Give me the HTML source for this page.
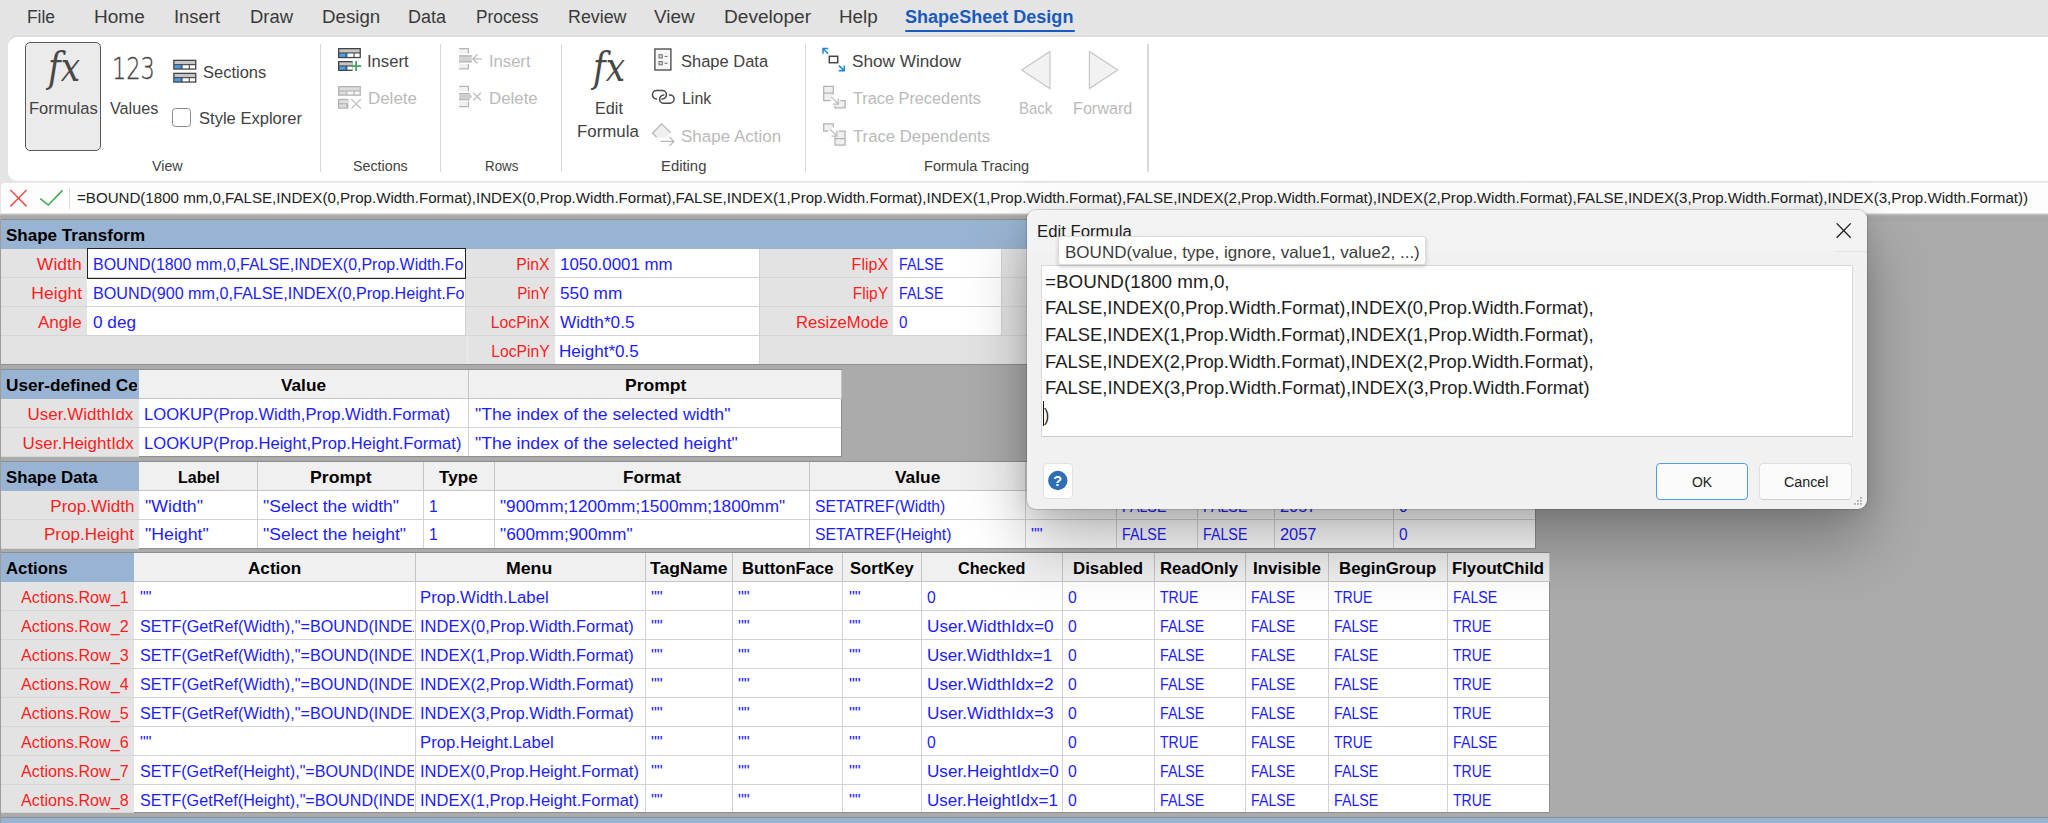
<!DOCTYPE html>
<html lang="en"><head><meta charset="utf-8"><title>ShapeSheet</title>
<style>
html,body{margin:0;padding:0;background:#ababab;}
body{width:2048px;height:823px;position:relative;overflow:hidden;font-family:'Liberation Sans',sans-serif;}
div,.a{position:absolute;}
.g{left:0;top:0;width:2048px;height:823px;}
.t{position:absolute;white-space:pre;line-height:20px;display:block;}
.clip{position:absolute;overflow:hidden;}
</style></head>
<body>
<div class="g" id="ribbon"><div style="left:0.00px;top:0.00px;width:2048.00px;height:36.00px;background:#e4e4e4;"></div>
<span class="t" style="top:6.89px;font-size:18.8px;color:#3a3a3a;left:27.00px;transform:scaleX(0.9251);transform-origin:0 0;">File</span>
<span class="t" style="top:6.89px;font-size:18.8px;color:#3a3a3a;left:93.75px;transform:scaleX(1.0128);transform-origin:0 0;">Home</span>
<span class="t" style="top:6.89px;font-size:18.8px;color:#3a3a3a;left:174.00px;transform:scaleX(0.9790);transform-origin:0 0;">Insert</span>
<span class="t" style="top:6.89px;font-size:18.8px;color:#3a3a3a;left:250.00px;transform:scaleX(0.9811);transform-origin:0 0;">Draw</span>
<span class="t" style="top:6.89px;font-size:18.8px;color:#3a3a3a;left:321.75px;transform:scaleX(0.9963);transform-origin:0 0;">Design</span>
<span class="t" style="top:6.89px;font-size:18.8px;color:#3a3a3a;left:408.00px;transform:scaleX(0.9579);transform-origin:0 0;">Data</span>
<span class="t" style="top:6.89px;font-size:18.8px;color:#3a3a3a;left:476.25px;transform:scaleX(0.9212);transform-origin:0 0;">Process</span>
<span class="t" style="top:6.89px;font-size:18.8px;color:#3a3a3a;left:568.00px;transform:scaleX(0.9498);transform-origin:0 0;">Review</span>
<span class="t" style="top:6.89px;font-size:18.8px;color:#3a3a3a;left:654.40px;transform:scaleX(1.0056);transform-origin:0 0;">View</span>
<span class="t" style="top:6.89px;font-size:18.8px;color:#3a3a3a;left:724.00px;transform:scaleX(1.0162);transform-origin:0 0;">Developer</span>
<span class="t" style="top:6.89px;font-size:18.8px;color:#3a3a3a;left:838.75px;transform:scaleX(1.0028);transform-origin:0 0;">Help</span>
<span class="t" style="top:6.89px;font-size:18.8px;color:#185abd;font-weight:700;left:905.00px;transform:scaleX(0.9604);transform-origin:0 0;">ShapeSheet Design</span>
<div style="left:905.00px;top:29.60px;width:169.70px;height:2.40px;background:#185abd;border-radius:1.2px;"></div>
<div style="left:0.00px;top:36.00px;width:2048.00px;height:177.50px;background:#e4e4e4;"></div>
<div style="left:7.60px;top:35.30px;width:2048.00px;height:145.30px;background:#dcdcdc;border-radius:9px 0 0 9px;"></div>
<div style="left:7.60px;top:36.60px;width:2048.00px;height:144.00px;background:#fff;border-radius:9px 0 0 9px;"></div>
<div style="left:319.65px;top:43.50px;width:1.10px;height:128.50px;background:#d9d9d9;"></div>
<div style="left:440.05px;top:43.50px;width:1.10px;height:128.50px;background:#d9d9d9;"></div>
<div style="left:560.75px;top:43.50px;width:1.10px;height:128.50px;background:#d9d9d9;"></div>
<div style="left:804.75px;top:43.50px;width:1.10px;height:128.50px;background:#d9d9d9;"></div>
<div style="left:1147.45px;top:43.50px;width:1.10px;height:128.50px;background:#d9d9d9;"></div>
<div style="left:25.10px;top:42.40px;width:75.70px;height:109.10px;background:#ebebeb;border:1.2px solid #5a5a5a;border-radius:5px;box-sizing:border-box;"></div>
<span class="t" style="top:98.34px;font-size:17.2px;color:#424242;left:28.80px;transform:scaleX(0.9590);transform-origin:0 0;">Formulas</span>
<span class="t" style="top:98.34px;font-size:17.2px;color:#424242;left:110.20px;transform:scaleX(0.9419);transform-origin:0 0;">Values</span>
<span class="t" style="top:62.34px;font-size:17.2px;color:#424242;left:202.80px;transform:scaleX(0.9587);transform-origin:0 0;">Sections</span>
<span class="t" style="top:108.24px;font-size:17.2px;color:#424242;left:199.00px;transform:scaleX(0.9626);transform-origin:0 0;">Style Explorer</span>
<div style="left:172.20px;top:108.20px;width:18.60px;height:18.40px;background:#fff;border:1.2px solid #8a8a8a;border-radius:3.5px;box-sizing:border-box;"></div>
<span class="t" style="top:156.11px;font-size:14.7px;color:#424242;left:151.60px;transform:scaleX(0.9690);transform-origin:0 0;">View</span>
<span class="t" style="left:111.6px;top:49.4px;font-size:30.4px;line-height:40px;color:#444;font-family:'DejaVu Sans Light','DejaVu Sans','Liberation Sans',sans-serif;font-weight:200;-webkit-text-stroke:.3px #444;transform:scaleX(.74);transform-origin:0 0;">123</span>
<span class="t" style="left:48.1px;top:39.4px;font-size:40.6px;line-height:56px;color:#484848;font-family:'DejaVu Serif Condensed','DejaVu Serif','Liberation Serif',serif;font-style:italic;transform:scaleX(0.94);transform-origin:0 0;">fx</span>
<span class="t" style="left:593.2px;top:39.4px;font-size:40.6px;line-height:56px;color:#484848;font-family:'DejaVu Serif Condensed','DejaVu Serif','Liberation Serif',serif;font-style:italic;transform:scaleX(0.94);transform-origin:0 0;">fx</span>
<span class="t" style="top:51.04px;font-size:17.2px;color:#424242;left:367.40px;transform:scaleX(0.9674);transform-origin:0 0;">Insert</span>
<span class="t" style="top:88.34px;font-size:17.2px;color:#bababa;left:367.70px;transform:scaleX(0.9842);transform-origin:0 0;">Delete</span>
<span class="t" style="top:156.11px;font-size:14.7px;color:#424242;left:353.30px;transform:scaleX(0.9708);transform-origin:0 0;">Sections</span>
<span class="t" style="top:51.04px;font-size:17.2px;color:#bababa;left:488.50px;transform:scaleX(0.9651);transform-origin:0 0;">Insert</span>
<span class="t" style="top:88.34px;font-size:17.2px;color:#bababa;left:489.00px;transform:scaleX(0.9801);transform-origin:0 0;">Delete</span>
<span class="t" style="top:156.11px;font-size:14.7px;color:#424242;left:484.50px;transform:scaleX(0.9092);transform-origin:0 0;">Rows</span>
<span class="t" style="top:98.34px;font-size:17.2px;color:#424242;left:594.60px;transform:scaleX(0.9418);transform-origin:0 0;">Edit</span>
<span class="t" style="top:121.14px;font-size:17.2px;color:#424242;left:577.00px;transform:scaleX(0.9818);transform-origin:0 0;">Formula</span>
<span class="t" style="top:51.04px;font-size:17.2px;color:#424242;left:681.00px;transform:scaleX(0.9594);transform-origin:0 0;">Shape Data</span>
<span class="t" style="top:88.34px;font-size:17.2px;color:#424242;left:681.50px;transform:scaleX(0.9261);transform-origin:0 0;">Link</span>
<span class="t" style="top:125.74px;font-size:17.2px;color:#bababa;left:681.00px;transform:scaleX(0.9892);transform-origin:0 0;">Shape Action</span>
<span class="t" style="top:156.11px;font-size:14.7px;color:#424242;left:660.60px;transform:scaleX(1.0106);transform-origin:0 0;">Editing</span>
<span class="t" style="top:51.04px;font-size:17.2px;color:#424242;left:852.30px;transform:scaleX(0.9999);transform-origin:0 0;">Show Window</span>
<span class="t" style="top:88.34px;font-size:17.2px;color:#bababa;left:852.80px;transform:scaleX(0.9473);transform-origin:0 0;">Trace Precedents</span>
<span class="t" style="top:125.74px;font-size:17.2px;color:#bababa;left:852.80px;transform:scaleX(0.9732);transform-origin:0 0;">Trace Dependents</span>
<span class="t" style="top:98.34px;font-size:17.2px;color:#bababa;left:1019.00px;transform:scaleX(0.8713);transform-origin:0 0;">Back</span>
<span class="t" style="top:98.34px;font-size:17.2px;color:#bababa;left:1073.20px;transform:scaleX(0.9406);transform-origin:0 0;">Forward</span>
<span class="t" style="top:156.11px;font-size:14.7px;color:#424242;left:924.40px;transform:scaleX(0.9903);transform-origin:0 0;">Formula Tracing</span>
<svg class="a" style="left:0;top:36px" width="1160" height="145" viewBox="0 36 1160 145"><rect x="173.20" y="59.70" width="23.20" height="10.00" fill="#444"/><rect x="174.50" y="61.00" width="20.60" height="3.1" fill="#c6c6c6"/><rect x="174.50" y="65.20" width="7.00" height="3.20" fill="#4f9fe3"/><rect x="180.30" y="65.20" width="1.2" height="3.20" fill="#1f78cf"/><rect x="182.60" y="65.20" width="6.10" height="3.20" fill="#fff"/><rect x="189.80" y="65.20" width="5.30" height="3.20" fill="#fff"/><rect x="173.20" y="72.70" width="23.20" height="10.00" fill="#444"/><rect x="174.50" y="74.00" width="20.60" height="3.1" fill="#c6c6c6"/><rect x="174.50" y="78.20" width="7.00" height="3.20" fill="#4f9fe3"/><rect x="180.30" y="78.20" width="1.2" height="3.20" fill="#1f78cf"/><rect x="182.60" y="78.20" width="6.10" height="3.20" fill="#fff"/><rect x="189.80" y="78.20" width="5.30" height="3.20" fill="#fff"/><rect x="338.00" y="48.00" width="22.90" height="10.20" fill="#444"/><rect x="339.30" y="49.30" width="20.30" height="3.1" fill="#c6c6c6"/><rect x="339.30" y="53.50" width="7.00" height="3.40" fill="#4f9fe3"/><rect x="345.10" y="53.50" width="1.2" height="3.40" fill="#1f78cf"/><rect x="347.40" y="53.50" width="6.10" height="3.40" fill="#fff"/><rect x="354.60" y="53.50" width="5.00" height="3.40" fill="#fff"/><rect x="338.00" y="61.00" width="14.60" height="10.00" fill="#444"/><rect x="339.30" y="62.30" width="13.30" height="3.1" fill="#c6c6c6"/><rect x="339.30" y="66.50" width="7.00" height="3.20" fill="#4f9fe3"/><rect x="345.10" y="66.50" width="1.2" height="3.20" fill="#1f78cf"/><rect x="347.40" y="66.50" width="5.20" height="3.20" fill="#fff"/><path d="M351.1 66.2H361.1M356.1 61.1V71.1" stroke="#3da55b" stroke-width="1.8" fill="none"/><rect x="338.00" y="86.00" width="22.90" height="9.80" fill="#b3b3b3"/><rect x="339.30" y="87.30" width="20.30" height="3.1" fill="#dedede"/><rect x="339.30" y="91.50" width="7.00" height="3.00" fill="#dcdcdc"/><rect x="347.40" y="91.50" width="6.10" height="3.00" fill="#f6f6f6"/><rect x="354.60" y="91.50" width="5.00" height="3.00" fill="#f6f6f6"/><rect x="338.00" y="98.80" width="10.40" height="10.00" fill="#b3b3b3"/><rect x="339.30" y="100.10" width="9.10" height="3.1" fill="#dedede"/><rect x="339.30" y="104.30" width="7.00" height="3.20" fill="#dcdcdc"/><path d="M351.4 99.1L360.9 108.6M360.9 99.1L351.4 108.6" stroke="#bcbcbc" stroke-width="1.3" fill="none"/><path d="M459.1 48.60H468.4V53.60H459.1Z" fill="#f1f1f1" stroke="none"/><path d="M459.1 48.60H468.4V53.60" fill="none" stroke="#b5b5b5" stroke-width="1.25"/><path d="M459.1 63.90H468.4V68.90H459.1Z" fill="#f1f1f1" stroke="none"/><path d="M459.1 68.90H468.4V63.90" fill="none" stroke="#b5b5b5" stroke-width="1.25"/><rect x="459.1" y="55.60" width="12.6" height="6.5" fill="#d2d2d2"/><path d="M459.1 55.90H471.9M459.1 61.90H471.9" stroke="#b1b1b1" stroke-width="1.2" fill="none"/><path d="M481.9 58.90H473M477.6 54.30L472.8 58.90L477.6 63.50" stroke="#bdbdbd" stroke-width="1.25" fill="none"/><path d="M459.1 86.30H468.4V91.30H459.1Z" fill="#f1f1f1" stroke="none"/><path d="M459.1 86.30H468.4V91.30" fill="none" stroke="#b5b5b5" stroke-width="1.25"/><path d="M459.1 101.60H468.4V106.60H459.1Z" fill="#f1f1f1" stroke="none"/><path d="M459.1 106.60H468.4V101.60" fill="none" stroke="#b5b5b5" stroke-width="1.25"/><path d="M459.1 93.00H469.2L472.2 96.60L469.2 100.20H459.1Z" fill="#cfcfcf"/><path d="M459.1 93.50H469.4M459.1 99.70H469.4" stroke="#b4b4b4" stroke-width="1.1" fill="none"/><path d="M473.3 92.70L480.9 100.30M480.9 92.70L473.3 100.30" stroke="#bdbdbd" stroke-width="1.25" fill="none"/><rect x="654.9" y="49.0" width="16.0" height="21.0" fill="#f6f6f6" stroke="#444" stroke-width="1.3"/><rect x="659.0" y="54.7" width="3.3" height="3.3" fill="#d8d8d8" stroke="#666" stroke-width="0.9"/><path d="M664.6 56.40H667.5" stroke="#666" stroke-width="1"/><rect x="659.0" y="61.5" width="3.3" height="3.3" fill="#d8d8d8" stroke="#666" stroke-width="0.9"/><path d="M664.6 63.20H667.5" stroke="#666" stroke-width="1"/><path d="M656.6 98.9A4.15 4.15 0 0 1 656.6 90.6H662.3A4.15 4.15 0 0 1 662.3 98.9H661.9" fill="none" stroke="#484848" stroke-width="1.5" stroke-linecap="round"/><path d="M663.8 94.9A4.2 4.2 0 0 0 663.9 103.3H669.9A4.2 4.2 0 0 0 669.9 94.9H669.4" fill="none" stroke="#484848" stroke-width="1.5" stroke-linecap="round"/><path d="M661.6 123.9L670.8 132.4L665.5 137.8H657.2L652.6 133.2Z" fill="#efefef"/><path d="M670.8 132.6L661.6 123.9L652.6 133.2L656.6 137.3" fill="none" stroke="#b7b7b7" stroke-width="1.3"/><path d="M660.6 141.4H673.8M669.4 136.9L673.9 141.4L669.4 145.9" fill="none" stroke="#b7b7b7" stroke-width="1.3"/><rect x="829.3" y="56.3" width="8.4" height="6.4" fill="#fff" stroke="#444" stroke-width="1.5"/><path d="M828.2 53.8L823.2 48.8M823.0 53.7V48.6H828.3" fill="none" stroke="#1e88d6" stroke-width="1.5"/><path d="M839.0 65.6L844.0 70.6M844.2 65.4V70.8H838.7" fill="none" stroke="#1e88d6" stroke-width="1.5"/><path d="M823.7 86.3H833.3V94.0L830.4 100.6H823.7Z" fill="#f0f0f0"/><path d="M823.7 86.3H833.3V93.2H823.7Z" fill="#f0f0f0" stroke="#b2b2b2" stroke-width="1.25"/><path d="M833.3 93.2V94.6M823.7 93.2V100.6H830.4" fill="none" stroke="#b2b2b2" stroke-width="1.25"/><path d="M834.9 100.6H845.1V107.8H834.9Z" fill="#f0f0f0"/><path d="M840.3 100.6H845.1V107.8H834.9V105.8" fill="none" stroke="#b2b2b2" stroke-width="1.25"/><path d="M831.2 96.9L838.2 103.9M838.4 98.5V104.1H832.9" fill="none" stroke="#bdbdbd" stroke-width="1.2"/><path d="M823.7 123.9H833.3V127.2L828.3 131.0H823.7Z" fill="#f0f0f0"/><path d="M833.3 127.2V123.9H823.7V131.0H828.3" fill="none" stroke="#b2b2b2" stroke-width="1.25"/><path d="M835.1 131.2H845.1V145.0H835.1Z" fill="#f0f0f0"/><path d="M838.7 131.2H845.1V145.0H835.1V136.6M835.1 138.5H845.1" fill="none" stroke="#b2b2b2" stroke-width="1.25"/><path d="M830.2 129.5L836.8 135.9M836.9 130.5V136.1H831.5" fill="none" stroke="#bdbdbd" stroke-width="1.2"/><path d="M1021.6 70L1050.0 51.4V88.6Z" fill="#f2f2f2" stroke="#c8c8c8" stroke-width="1.2" stroke-linejoin="miter"/><path d="M1117.8 70L1089.4 51.4V88.6Z" fill="#f2f2f2" stroke="#c8c8c8" stroke-width="1.2" stroke-linejoin="miter"/></svg>
</div>
<div class="g" id="formula-bar"><div style="left:12.00px;top:180.60px;width:2040.00px;height:3.00px;background:linear-gradient(#dedede 0,#e6e6e6 30%,#f6f6f6 100%);"></div>
<div style="left:1.20px;top:183.30px;width:2048.00px;height:30.20px;background:#fdfdfd;border-radius:4px 0 0 0;"></div>
<div style="left:69.20px;top:188.40px;width:1.20px;height:20.60px;background:#dadada;"></div>
<span class="t" style="top:187.73px;font-size:15.2px;color:#222;left:76.90px;transform:scaleX(0.9941);transform-origin:0 0;">=BOUND(1800 mm,0,FALSE,INDEX(0,Prop.Width.Format),INDEX(0,Prop.Width.Format),FALSE,INDEX(1,Prop.Width.Format),INDEX(1,Prop.Width.Format),FALSE,INDEX(2,Prop.Width.Format),INDEX(2,Prop.Width.Format),FALSE,INDEX(3,Prop.Width.Format),INDEX(3,Prop.Width.Format))</span>
<svg class="a" style="left:8px;top:187px" width="60" height="22" viewBox="0 0 60 22"><path d="M2.4 3L18.6 19.4M18.6 3L2.4 19.4" stroke="#e8524f" stroke-width="1.5" fill="none"/><path d="M32.3 11.6L40.3 18L54.6 3.2" stroke="#3fa556" stroke-width="1.6" fill="none"/></svg>
</div>
<div class="g" id="shapesheet"><div style="left:0.00px;top:213.50px;width:2048.00px;height:610.00px;background:#ababab;"></div>
<div style="left:0.00px;top:213.50px;width:2048.00px;height:7.00px;background:linear-gradient(#c4c4c4 0,#a9a9a9 28%,#a6a6a6 100%);"></div>
<div style="left:0.00px;top:220.00px;width:1.30px;height:603.00px;background:#9c9c9c;"></div>
<div style="left:1.00px;top:219.00px;width:1540.40px;height:146.40px;background:#8e8e8e;"></div>
<div style="left:1.00px;top:220.00px;width:1539.00px;height:144.00px;background:#d3d3d3;"></div>
<div style="left:1.00px;top:220.00px;width:1539.00px;height:29.00px;background:#99b4d2;"></div>
<span class="t" style="top:225.35px;font-size:16.3px;color:#000;font-weight:700;left:5.70px;transform:scaleX(1.0454);transform-origin:0 0;">Shape Transform</span>
<div style="left:1.00px;top:249.00px;width:86.00px;height:29.00px;background:#d6d6d6;"></div>
<div style="left:1.00px;top:249.00px;width:86.00px;height:28.00px;background:#e3e3e3;"></div>
<span class="t" style="top:254.25px;font-size:16.3px;color:#ff1c1c;right:1966.25px;transform:scaleX(1.0751);transform-origin:100% 0;">Width</span>
<div style="left:87.00px;top:249.00px;width:378.00px;height:28.00px;background:#fff;"></div>
<div class="clip" style="left:92.50px;top:249px;width:371.90px;height:29px"><span class="t" style="left:0;top:5.25px;font-size:16.3px;color:#1c1cff;transform:scaleX(0.9793);transform-origin:0 0;">BOUND(1800 mm,0,FALSE,INDEX(0,Prop.Width.Format),INDEX(0,Prop.Width.Format))</span></div>
<div style="left:466.00px;top:249.00px;width:89.00px;height:29.00px;background:#d6d6d6;"></div>
<div style="left:466.00px;top:249.00px;width:89.00px;height:28.00px;background:#e3e3e3;"></div>
<span class="t" style="top:254.25px;font-size:16.3px;color:#ff1c1c;right:1498.80px;transform:scaleX(0.9649);transform-origin:100% 0;">PinX</span>
<div style="left:555.00px;top:249.00px;width:204.00px;height:28.00px;background:#fff;"></div>
<span class="t" style="top:254.25px;font-size:16.3px;color:#1c1cff;left:559.70px;transform:scaleX(1.0375);transform-origin:0 0;">1050.0001 mm</span>
<div style="left:760.00px;top:249.00px;width:133.00px;height:29.00px;background:#d6d6d6;"></div>
<div style="left:760.00px;top:249.00px;width:133.00px;height:28.00px;background:#e3e3e3;"></div>
<span class="t" style="top:254.25px;font-size:16.3px;color:#ff1c1c;right:1159.80px;transform:scaleX(0.9836);transform-origin:100% 0;">FlipX</span>
<div style="left:893.00px;top:249.00px;width:108.00px;height:28.00px;background:#fff;"></div>
<span class="t" style="top:254.25px;font-size:16.3px;color:#1c1cff;left:899.00px;transform:scaleX(0.8760);transform-origin:0 0;">FALSE</span>
<div style="left:1002.00px;top:249.00px;width:538.00px;height:29.00px;background:#d6d6d6;"></div>
<div style="left:1002.00px;top:249.00px;width:538.00px;height:28.00px;background:#e3e3e3;"></div>
<div style="left:1.00px;top:278.00px;width:86.00px;height:29.00px;background:#d6d6d6;"></div>
<div style="left:1.00px;top:278.00px;width:86.00px;height:28.00px;background:#e3e3e3;"></div>
<span class="t" style="top:283.15px;font-size:16.3px;color:#ff1c1c;right:1966.25px;transform:scaleX(1.0780);transform-origin:100% 0;">Height</span>
<div style="left:87.00px;top:278.00px;width:378.00px;height:28.00px;background:#fff;"></div>
<div class="clip" style="left:92.50px;top:278px;width:371.90px;height:29px"><span class="t" style="left:0;top:5.15px;font-size:16.3px;color:#1c1cff;transform:scaleX(0.9917);transform-origin:0 0;">BOUND(900 mm,0,FALSE,INDEX(0,Prop.Height.Format),INDEX(0,Prop.Height.Format))</span></div>
<div style="left:466.00px;top:278.00px;width:89.00px;height:29.00px;background:#d6d6d6;"></div>
<div style="left:466.00px;top:278.00px;width:89.00px;height:28.00px;background:#e3e3e3;"></div>
<span class="t" style="top:283.15px;font-size:16.3px;color:#ff1c1c;right:1498.80px;transform:scaleX(0.9359);transform-origin:100% 0;">PinY</span>
<div style="left:555.00px;top:278.00px;width:204.00px;height:28.00px;background:#fff;"></div>
<span class="t" style="top:283.15px;font-size:16.3px;color:#1c1cff;left:559.70px;transform:scaleX(1.0590);transform-origin:0 0;">550 mm</span>
<div style="left:760.00px;top:278.00px;width:133.00px;height:29.00px;background:#d6d6d6;"></div>
<div style="left:760.00px;top:278.00px;width:133.00px;height:28.00px;background:#e3e3e3;"></div>
<span class="t" style="top:283.15px;font-size:16.3px;color:#ff1c1c;right:1159.80px;transform:scaleX(0.9539);transform-origin:100% 0;">FlipY</span>
<div style="left:893.00px;top:278.00px;width:108.00px;height:28.00px;background:#fff;"></div>
<span class="t" style="top:283.15px;font-size:16.3px;color:#1c1cff;left:899.00px;transform:scaleX(0.8760);transform-origin:0 0;">FALSE</span>
<div style="left:1002.00px;top:278.00px;width:538.00px;height:29.00px;background:#d6d6d6;"></div>
<div style="left:1002.00px;top:278.00px;width:538.00px;height:28.00px;background:#e3e3e3;"></div>
<div style="left:1.00px;top:307.00px;width:86.00px;height:29.00px;background:#d6d6d6;"></div>
<div style="left:1.00px;top:307.00px;width:86.00px;height:28.00px;background:#e3e3e3;"></div>
<span class="t" style="top:312.05px;font-size:16.3px;color:#ff1c1c;right:1966.25px;transform:scaleX(1.0503);transform-origin:100% 0;">Angle</span>
<div style="left:87.00px;top:307.00px;width:378.00px;height:28.00px;background:#fff;"></div>
<span class="t" style="top:312.05px;font-size:16.3px;color:#1c1cff;left:92.50px;transform:scaleX(1.0552);transform-origin:0 0;">0 deg</span>
<div style="left:466.00px;top:307.00px;width:89.00px;height:29.00px;background:#d6d6d6;"></div>
<div style="left:466.00px;top:307.00px;width:89.00px;height:28.00px;background:#e3e3e3;"></div>
<span class="t" style="top:312.05px;font-size:16.3px;color:#ff1c1c;right:1498.80px;transform:scaleX(0.9710);transform-origin:100% 0;">LocPinX</span>
<div style="left:555.00px;top:307.00px;width:204.00px;height:28.00px;background:#fff;"></div>
<span class="t" style="top:312.05px;font-size:16.3px;color:#1c1cff;left:559.70px;transform:scaleX(1.0553);transform-origin:0 0;">Width*0.5</span>
<div style="left:760.00px;top:307.00px;width:133.00px;height:29.00px;background:#d6d6d6;"></div>
<div style="left:760.00px;top:307.00px;width:133.00px;height:28.00px;background:#e3e3e3;"></div>
<span class="t" style="top:312.05px;font-size:16.3px;color:#ff1c1c;right:1159.80px;transform:scaleX(1.0232);transform-origin:100% 0;">ResizeMode</span>
<div style="left:893.00px;top:307.00px;width:108.00px;height:28.00px;background:#fff;"></div>
<span class="t" style="top:312.05px;font-size:16.3px;color:#1c1cff;left:899.00px;transform:scaleX(0.9379);transform-origin:0 0;">0</span>
<div style="left:1002.00px;top:307.00px;width:538.00px;height:29.00px;background:#d6d6d6;"></div>
<div style="left:1002.00px;top:307.00px;width:538.00px;height:28.00px;background:#e3e3e3;"></div>
<div style="left:1.00px;top:336.00px;width:466.00px;height:28.00px;background:#d6d6d6;"></div>
<div style="left:1.00px;top:336.00px;width:466.00px;height:28.00px;background:#e3e3e3;"></div>
<div style="left:467.00px;top:336.00px;width:1.00px;height:28.00px;background:#ededed;"></div>
<div style="left:468.00px;top:336.00px;width:87.00px;height:28.00px;background:#d6d6d6;"></div>
<div style="left:468.00px;top:336.00px;width:87.00px;height:28.00px;background:#e3e3e3;"></div>
<span class="t" style="top:340.95px;font-size:16.3px;color:#ff1c1c;right:1498.80px;transform:scaleX(0.9628);transform-origin:100% 0;">LocPinY</span>
<div style="left:555.00px;top:336.00px;width:204.00px;height:28.00px;background:#fff;"></div>
<span class="t" style="top:340.95px;font-size:16.3px;color:#1c1cff;left:559.20px;transform:scaleX(1.0494);transform-origin:0 0;">Height*0.5</span>
<div style="left:760.00px;top:336.00px;width:780.00px;height:28.00px;background:#d6d6d6;"></div>
<div style="left:760.00px;top:336.00px;width:780.00px;height:28.00px;background:#e3e3e3;"></div>
<div style="left:86.60px;top:248.30px;width:379.30px;height:30.30px;border:1.6px solid #242424;box-sizing:border-box;"></div>
<div style="left:1.00px;top:369.00px;width:841.40px;height:88.40px;background:#8e8e8e;"></div>
<div style="left:1.00px;top:370.00px;width:840.00px;height:86.00px;background:#d3d3d3;"></div>
<div style="left:1.00px;top:370.00px;width:138.00px;height:29.00px;background:#99b4d2;"></div>
<div class="clip" style="left:1px;top:370px;width:136.40px;height:29px"><span class="t" style="left:4.50px;top:5.35px;font-size:16.3px;font-weight:700;transform:scaleX(1.0556);transform-origin:0 0;">User-defined Cells</span></div>
<div style="left:139.00px;top:370.00px;width:330.00px;height:29.00px;background:#c4c4c4;"></div>
<div style="left:139.00px;top:370.00px;width:329.00px;height:28.00px;background:#f0f0f0;"></div>
<span class="t" style="top:375.35px;font-size:16.3px;color:#000;font-weight:700;left:281.25px;transform:scaleX(1.0577);transform-origin:0 0;">Value</span>
<div style="left:469.00px;top:370.00px;width:373.00px;height:29.00px;background:#c4c4c4;"></div>
<div style="left:469.00px;top:370.00px;width:372.00px;height:28.00px;background:#f0f0f0;"></div>
<span class="t" style="top:375.35px;font-size:16.3px;color:#000;font-weight:700;left:624.60px;transform:scaleX(1.0775);transform-origin:0 0;">Prompt</span>
<div style="left:1.00px;top:399.00px;width:138.00px;height:29.00px;background:#d6d6d6;"></div>
<div style="left:1.00px;top:399.00px;width:138.00px;height:28.00px;background:#e3e3e3;"></div>
<span class="t" style="top:403.75px;font-size:16.3px;color:#ff1c1c;right:1914.25px;transform:scaleX(1.0435);transform-origin:100% 0;">User.WidthIdx</span>
<div style="left:139.00px;top:399.00px;width:329.00px;height:28.00px;background:#fff;"></div>
<span class="t" style="top:403.75px;font-size:16.3px;color:#1c1cff;left:143.75px;transform:scaleX(1.0195);transform-origin:0 0;">LOOKUP(Prop.Width,Prop.Width.Format)</span>
<div style="left:469.00px;top:399.00px;width:372.00px;height:28.00px;background:#fff;"></div>
<span class="t" style="top:403.75px;font-size:16.3px;color:#1c1cff;left:474.60px;transform:scaleX(1.0821);transform-origin:0 0;">"The index of the selected width"</span>
<div style="left:1.00px;top:428.00px;width:138.00px;height:29.00px;background:#d6d6d6;"></div>
<div style="left:1.00px;top:428.00px;width:138.00px;height:28.00px;background:#e3e3e3;"></div>
<span class="t" style="top:432.65px;font-size:16.3px;color:#ff1c1c;right:1914.25px;transform:scaleX(1.0417);transform-origin:100% 0;">User.HeightIdx</span>
<div style="left:139.00px;top:428.00px;width:329.00px;height:28.00px;background:#fff;"></div>
<span class="t" style="top:432.65px;font-size:16.3px;color:#1c1cff;left:143.75px;transform:scaleX(1.0200);transform-origin:0 0;">LOOKUP(Prop.Height,Prop.Height.Format)</span>
<div style="left:469.00px;top:428.00px;width:372.00px;height:28.00px;background:#fff;"></div>
<span class="t" style="top:432.65px;font-size:16.3px;color:#1c1cff;left:474.60px;transform:scaleX(1.0843);transform-origin:0 0;">"The index of the selected height"</span>
<div style="left:1.00px;top:461.00px;width:1535.40px;height:88.40px;background:#8e8e8e;"></div>
<div style="left:1.00px;top:462.00px;width:1534.00px;height:86.00px;background:#d3d3d3;"></div>
<div style="left:1.00px;top:462.00px;width:138.00px;height:29.00px;background:#99b4d2;"></div>
<span class="t" style="top:467.35px;font-size:16.3px;color:#000;font-weight:700;left:5.50px;transform:scaleX(1.0317);transform-origin:0 0;">Shape Data</span>
<div style="left:139.00px;top:462.00px;width:119.00px;height:29.00px;background:#c4c4c4;"></div>
<div style="left:139.00px;top:462.00px;width:118.00px;height:28.00px;background:#f0f0f0;"></div>
<span class="t" style="top:467.35px;font-size:16.3px;color:#000;font-weight:700;left:177.50px;transform:scaleX(0.9816);transform-origin:0 0;">Label</span>
<div style="left:258.00px;top:462.00px;width:166.00px;height:29.00px;background:#c4c4c4;"></div>
<div style="left:258.00px;top:462.00px;width:165.00px;height:28.00px;background:#f0f0f0;"></div>
<span class="t" style="top:467.35px;font-size:16.3px;color:#000;font-weight:700;left:310.00px;transform:scaleX(1.0836);transform-origin:0 0;">Prompt</span>
<div style="left:424.00px;top:462.00px;width:71.00px;height:29.00px;background:#c4c4c4;"></div>
<div style="left:424.00px;top:462.00px;width:70.00px;height:28.00px;background:#f0f0f0;"></div>
<span class="t" style="top:467.35px;font-size:16.3px;color:#000;font-weight:700;left:439.25px;transform:scaleX(1.0531);transform-origin:0 0;">Type</span>
<div style="left:495.00px;top:462.00px;width:315.00px;height:29.00px;background:#c4c4c4;"></div>
<div style="left:495.00px;top:462.00px;width:314.00px;height:28.00px;background:#f0f0f0;"></div>
<span class="t" style="top:467.35px;font-size:16.3px;color:#000;font-weight:700;left:622.50px;transform:scaleX(1.0510);transform-origin:0 0;">Format</span>
<div style="left:810.00px;top:462.00px;width:216.00px;height:29.00px;background:#c4c4c4;"></div>
<div style="left:810.00px;top:462.00px;width:215.00px;height:28.00px;background:#f0f0f0;"></div>
<span class="t" style="top:467.35px;font-size:16.3px;color:#000;font-weight:700;left:894.90px;transform:scaleX(1.0647);transform-origin:0 0;">Value</span>
<div style="left:1026.00px;top:462.00px;width:91.00px;height:29.00px;background:#c4c4c4;"></div>
<div style="left:1026.00px;top:462.00px;width:90.00px;height:28.00px;background:#f0f0f0;"></div>
<span class="t" style="top:467.35px;font-size:16.3px;color:#000;font-weight:700;left:1038.50px;transform:scaleX(1.0202);transform-origin:0 0;">SortKey</span>
<div style="left:1117.00px;top:462.00px;width:81.00px;height:29.00px;background:#c4c4c4;"></div>
<div style="left:1117.00px;top:462.00px;width:80.00px;height:28.00px;background:#f0f0f0;"></div>
<span class="t" style="top:467.35px;font-size:16.3px;color:#000;font-weight:700;left:1122.50px;transform:scaleX(1.0436);transform-origin:0 0;">Invisible</span>
<div style="left:1198.00px;top:462.00px;width:77.00px;height:29.00px;background:#c4c4c4;"></div>
<div style="left:1198.00px;top:462.00px;width:76.00px;height:28.00px;background:#f0f0f0;"></div>
<span class="t" style="top:467.35px;font-size:16.3px;color:#000;font-weight:700;left:1221.50px;transform:scaleX(0.9205);transform-origin:0 0;">Ask</span>
<div style="left:1275.00px;top:462.00px;width:119.00px;height:29.00px;background:#c4c4c4;"></div>
<div style="left:1275.00px;top:462.00px;width:118.00px;height:28.00px;background:#f0f0f0;"></div>
<span class="t" style="top:467.35px;font-size:16.3px;color:#000;font-weight:700;left:1306.00px;transform:scaleX(0.9969);transform-origin:0 0;">LangID</span>
<div style="left:1394.00px;top:462.00px;width:142.00px;height:29.00px;background:#c4c4c4;"></div>
<div style="left:1394.00px;top:462.00px;width:141.00px;height:28.00px;background:#f0f0f0;"></div>
<span class="t" style="top:467.35px;font-size:16.3px;color:#000;font-weight:700;left:1428.50px;transform:scaleX(1.0260);transform-origin:0 0;">Calendar</span>
<div style="left:1.00px;top:491.00px;width:138.00px;height:29.00px;background:#d6d6d6;"></div>
<div style="left:1.00px;top:491.00px;width:138.00px;height:28.00px;background:#e3e3e3;"></div>
<span class="t" style="top:495.55px;font-size:16.3px;color:#ff1c1c;right:1913.75px;transform:scaleX(1.0460);transform-origin:100% 0;">Prop.Width</span>
<div style="left:139.00px;top:491.00px;width:118.00px;height:28.00px;background:#fff;"></div>
<span class="t" style="top:495.55px;font-size:16.3px;color:#1c1cff;left:145.00px;transform:scaleX(1.0905);transform-origin:0 0;">"Width"</span>
<div style="left:258.00px;top:491.00px;width:165.00px;height:28.00px;background:#fff;"></div>
<span class="t" style="top:495.55px;font-size:16.3px;color:#1c1cff;left:263.25px;transform:scaleX(1.0751);transform-origin:0 0;">"Select the width"</span>
<div style="left:424.00px;top:491.00px;width:70.00px;height:28.00px;background:#fff;"></div>
<span class="t" style="top:495.55px;font-size:16.3px;color:#1c1cff;left:429.20px;transform:scaleX(0.9600);transform-origin:0 0;">1</span>
<div style="left:495.00px;top:491.00px;width:314.00px;height:28.00px;background:#fff;"></div>
<span class="t" style="top:495.55px;font-size:16.3px;color:#1c1cff;left:499.80px;transform:scaleX(1.0584);transform-origin:0 0;">"900mm;1200mm;1500mm;1800mm"</span>
<div style="left:810.00px;top:491.00px;width:215.00px;height:28.00px;background:#fff;"></div>
<span class="t" style="top:495.55px;font-size:16.3px;color:#1c1cff;left:815.00px;transform:scaleX(0.9646);transform-origin:0 0;">SETATREF(Width)</span>
<div style="left:1026.00px;top:491.00px;width:90.00px;height:28.00px;background:#fff;"></div>
<span class="t" style="top:495.55px;font-size:16.3px;color:#1c1cff;left:1030.80px;transform:scaleX(1.0119);transform-origin:0 0;">""</span>
<div style="left:1117.00px;top:491.00px;width:80.00px;height:28.00px;background:#fff;"></div>
<span class="t" style="top:495.55px;font-size:16.3px;color:#1c1cff;left:1121.90px;transform:scaleX(0.8760);transform-origin:0 0;">FALSE</span>
<div style="left:1198.00px;top:491.00px;width:76.00px;height:28.00px;background:#fff;"></div>
<span class="t" style="top:495.55px;font-size:16.3px;color:#1c1cff;left:1202.60px;transform:scaleX(0.8760);transform-origin:0 0;">FALSE</span>
<div style="left:1275.00px;top:491.00px;width:118.00px;height:28.00px;background:#fff;"></div>
<span class="t" style="top:495.55px;font-size:16.3px;color:#1c1cff;left:1279.90px;transform:scaleX(1.0073);transform-origin:0 0;">2057</span>
<div style="left:1394.00px;top:491.00px;width:141.00px;height:28.00px;background:#fff;"></div>
<span class="t" style="top:495.55px;font-size:16.3px;color:#1c1cff;left:1398.60px;transform:scaleX(0.9490);transform-origin:0 0;">0</span>
<div style="left:1.00px;top:520.00px;width:138.00px;height:29.00px;background:#d6d6d6;"></div>
<div style="left:1.00px;top:520.00px;width:138.00px;height:28.00px;background:#e3e3e3;"></div>
<span class="t" style="top:524.45px;font-size:16.3px;color:#ff1c1c;right:1913.75px;transform:scaleX(1.0467);transform-origin:100% 0;">Prop.Height</span>
<div style="left:139.00px;top:520.00px;width:118.00px;height:28.00px;background:#fff;"></div>
<span class="t" style="top:524.45px;font-size:16.3px;color:#1c1cff;left:145.00px;transform:scaleX(1.0874);transform-origin:0 0;">"Height"</span>
<div style="left:258.00px;top:520.00px;width:165.00px;height:28.00px;background:#fff;"></div>
<span class="t" style="top:524.45px;font-size:16.3px;color:#1c1cff;left:263.25px;transform:scaleX(1.0763);transform-origin:0 0;">"Select the height"</span>
<div style="left:424.00px;top:520.00px;width:70.00px;height:28.00px;background:#fff;"></div>
<span class="t" style="top:524.45px;font-size:16.3px;color:#1c1cff;left:429.20px;transform:scaleX(0.9600);transform-origin:0 0;">1</span>
<div style="left:495.00px;top:520.00px;width:314.00px;height:28.00px;background:#fff;"></div>
<span class="t" style="top:524.45px;font-size:16.3px;color:#1c1cff;left:499.80px;transform:scaleX(1.0636);transform-origin:0 0;">"600mm;900mm"</span>
<div style="left:810.00px;top:520.00px;width:215.00px;height:28.00px;background:#fff;"></div>
<span class="t" style="top:524.45px;font-size:16.3px;color:#1c1cff;left:815.00px;transform:scaleX(0.9713);transform-origin:0 0;">SETATREF(Height)</span>
<div style="left:1026.00px;top:520.00px;width:90.00px;height:28.00px;background:#fff;"></div>
<span class="t" style="top:524.45px;font-size:16.3px;color:#1c1cff;left:1030.80px;transform:scaleX(1.0119);transform-origin:0 0;">""</span>
<div style="left:1117.00px;top:520.00px;width:80.00px;height:28.00px;background:#fff;"></div>
<span class="t" style="top:524.45px;font-size:16.3px;color:#1c1cff;left:1121.90px;transform:scaleX(0.8760);transform-origin:0 0;">FALSE</span>
<div style="left:1198.00px;top:520.00px;width:76.00px;height:28.00px;background:#fff;"></div>
<span class="t" style="top:524.45px;font-size:16.3px;color:#1c1cff;left:1202.60px;transform:scaleX(0.8760);transform-origin:0 0;">FALSE</span>
<div style="left:1275.00px;top:520.00px;width:118.00px;height:28.00px;background:#fff;"></div>
<span class="t" style="top:524.45px;font-size:16.3px;color:#1c1cff;left:1279.90px;transform:scaleX(1.0073);transform-origin:0 0;">2057</span>
<div style="left:1394.00px;top:520.00px;width:141.00px;height:28.00px;background:#fff;"></div>
<span class="t" style="top:524.45px;font-size:16.3px;color:#1c1cff;left:1398.60px;transform:scaleX(0.9490);transform-origin:0 0;">0</span>
<div style="left:1.00px;top:552.00px;width:1549.40px;height:261.40px;background:#8e8e8e;"></div>
<div style="left:1.00px;top:553.00px;width:1548.00px;height:259.00px;background:#d3d3d3;"></div>
<div style="left:1.00px;top:553.00px;width:133.00px;height:29.00px;background:#99b4d2;"></div>
<span class="t" style="top:558.35px;font-size:16.3px;color:#000;font-weight:700;left:5.50px;transform:scaleX(1.0298);transform-origin:0 0;">Actions</span>
<div style="left:134.00px;top:553.00px;width:282.00px;height:29.00px;background:#c4c4c4;"></div>
<div style="left:134.00px;top:553.00px;width:281.00px;height:28.00px;background:#f0f0f0;"></div>
<span class="t" style="top:558.35px;font-size:16.3px;color:#000;font-weight:700;left:247.50px;transform:scaleX(1.0512);transform-origin:0 0;">Action</span>
<div style="left:416.00px;top:553.00px;width:230.00px;height:29.00px;background:#c4c4c4;"></div>
<div style="left:416.00px;top:553.00px;width:229.00px;height:28.00px;background:#f0f0f0;"></div>
<span class="t" style="top:558.35px;font-size:16.3px;color:#000;font-weight:700;left:506.25px;transform:scaleX(1.0878);transform-origin:0 0;">Menu</span>
<div style="left:646.00px;top:553.00px;width:87.00px;height:29.00px;background:#c4c4c4;"></div>
<div style="left:646.00px;top:553.00px;width:86.00px;height:28.00px;background:#f0f0f0;"></div>
<span class="t" style="top:558.35px;font-size:16.3px;color:#000;font-weight:700;left:650.00px;transform:scaleX(1.0750);transform-origin:0 0;">TagName</span>
<div style="left:733.00px;top:553.00px;width:110.00px;height:29.00px;background:#c4c4c4;"></div>
<div style="left:733.00px;top:553.00px;width:109.00px;height:28.00px;background:#f0f0f0;"></div>
<span class="t" style="top:558.35px;font-size:16.3px;color:#000;font-weight:700;left:741.75px;transform:scaleX(1.0218);transform-origin:0 0;">ButtonFace</span>
<div style="left:843.00px;top:553.00px;width:79.00px;height:29.00px;background:#c4c4c4;"></div>
<div style="left:843.00px;top:553.00px;width:78.00px;height:28.00px;background:#f0f0f0;"></div>
<span class="t" style="top:558.35px;font-size:16.3px;color:#000;font-weight:700;left:850.00px;transform:scaleX(1.0210);transform-origin:0 0;">SortKey</span>
<div style="left:922.00px;top:553.00px;width:141.00px;height:29.00px;background:#c4c4c4;"></div>
<div style="left:922.00px;top:553.00px;width:140.00px;height:28.00px;background:#f0f0f0;"></div>
<span class="t" style="top:558.35px;font-size:16.3px;color:#000;font-weight:700;left:958.00px;transform:scaleX(0.9945);transform-origin:0 0;">Checked</span>
<div style="left:1063.00px;top:553.00px;width:92.00px;height:29.00px;background:#c4c4c4;"></div>
<div style="left:1063.00px;top:553.00px;width:91.00px;height:28.00px;background:#f0f0f0;"></div>
<span class="t" style="top:558.35px;font-size:16.3px;color:#000;font-weight:700;left:1073.00px;transform:scaleX(1.0313);transform-origin:0 0;">Disabled</span>
<div style="left:1155.00px;top:553.00px;width:91.00px;height:29.00px;background:#c4c4c4;"></div>
<div style="left:1155.00px;top:553.00px;width:90.00px;height:28.00px;background:#f0f0f0;"></div>
<span class="t" style="top:558.35px;font-size:16.3px;color:#000;font-weight:700;left:1160.00px;transform:scaleX(1.0261);transform-origin:0 0;">ReadOnly</span>
<div style="left:1246.00px;top:553.00px;width:83.00px;height:29.00px;background:#c4c4c4;"></div>
<div style="left:1246.00px;top:553.00px;width:82.00px;height:28.00px;background:#f0f0f0;"></div>
<span class="t" style="top:558.35px;font-size:16.3px;color:#000;font-weight:700;left:1253.25px;transform:scaleX(1.0436);transform-origin:0 0;">Invisible</span>
<div style="left:1329.00px;top:553.00px;width:119.00px;height:29.00px;background:#c4c4c4;"></div>
<div style="left:1329.00px;top:553.00px;width:118.00px;height:28.00px;background:#f0f0f0;"></div>
<span class="t" style="top:558.35px;font-size:16.3px;color:#000;font-weight:700;left:1338.50px;transform:scaleX(1.0334);transform-origin:0 0;">BeginGroup</span>
<div style="left:1448.00px;top:553.00px;width:102.00px;height:29.00px;background:#c4c4c4;"></div>
<div style="left:1448.00px;top:553.00px;width:101.00px;height:28.00px;background:#f0f0f0;"></div>
<span class="t" style="top:558.35px;font-size:16.3px;color:#000;font-weight:700;left:1451.80px;transform:scaleX(1.0276);transform-origin:0 0;">FlyoutChild</span>
<div style="left:1.00px;top:582.00px;width:133.00px;height:29.00px;background:#d6d6d6;"></div>
<div style="left:1.00px;top:582.00px;width:133.00px;height:28.00px;background:#e3e3e3;"></div>
<span class="t" style="top:587.35px;font-size:16.3px;color:#ff1c1c;right:1919.25px;transform:scaleX(0.9898);transform-origin:100% 0;">Actions.Row_1</span>
<div style="left:134.00px;top:582.00px;width:281.00px;height:28.00px;background:#fff;"></div>
<span class="t" style="top:587.35px;font-size:16.3px;color:#1c1cff;left:140.00px;transform:scaleX(0.9946);transform-origin:0 0;">""</span>
<div style="left:416.00px;top:582.00px;width:229.00px;height:28.00px;background:#fff;"></div>
<span class="t" style="top:587.35px;font-size:16.3px;color:#1c1cff;left:420.00px;transform:scaleX(1.0308);transform-origin:0 0;">Prop.Width.Label</span>
<div style="left:646.00px;top:582.00px;width:86.00px;height:28.00px;background:#fff;"></div>
<span class="t" style="top:587.35px;font-size:16.3px;color:#1c1cff;left:650.75px;transform:scaleX(1.0162);transform-origin:0 0;">""</span>
<div style="left:733.00px;top:582.00px;width:109.00px;height:28.00px;background:#fff;"></div>
<span class="t" style="top:587.35px;font-size:16.3px;color:#1c1cff;left:738.25px;transform:scaleX(1.0162);transform-origin:0 0;">""</span>
<div style="left:843.00px;top:582.00px;width:78.00px;height:28.00px;background:#fff;"></div>
<span class="t" style="top:587.35px;font-size:16.3px;color:#1c1cff;left:848.75px;transform:scaleX(1.0162);transform-origin:0 0;">""</span>
<div style="left:922.00px;top:582.00px;width:140.00px;height:28.00px;background:#fff;"></div>
<span class="t" style="top:587.35px;font-size:16.3px;color:#1c1cff;left:926.75px;transform:scaleX(0.9655);transform-origin:0 0;">0</span>
<div style="left:1063.00px;top:582.00px;width:91.00px;height:28.00px;background:#fff;"></div>
<span class="t" style="top:587.35px;font-size:16.3px;color:#1c1cff;left:1068.00px;transform:scaleX(0.9655);transform-origin:0 0;">0</span>
<div style="left:1155.00px;top:582.00px;width:90.00px;height:28.00px;background:#fff;"></div>
<span class="t" style="top:587.35px;font-size:16.3px;color:#1c1cff;left:1159.50px;transform:scaleX(0.8663);transform-origin:0 0;">TRUE</span>
<div style="left:1246.00px;top:582.00px;width:82.00px;height:28.00px;background:#fff;"></div>
<span class="t" style="top:587.35px;font-size:16.3px;color:#1c1cff;left:1251.25px;transform:scaleX(0.8740);transform-origin:0 0;">FALSE</span>
<div style="left:1329.00px;top:582.00px;width:118.00px;height:28.00px;background:#fff;"></div>
<span class="t" style="top:587.35px;font-size:16.3px;color:#1c1cff;left:1334.40px;transform:scaleX(0.8663);transform-origin:0 0;">TRUE</span>
<div style="left:1448.00px;top:582.00px;width:101.00px;height:28.00px;background:#fff;"></div>
<span class="t" style="top:587.35px;font-size:16.3px;color:#1c1cff;left:1453.10px;transform:scaleX(0.8740);transform-origin:0 0;">FALSE</span>
<div style="left:1.00px;top:611.00px;width:133.00px;height:29.00px;background:#d6d6d6;"></div>
<div style="left:1.00px;top:611.00px;width:133.00px;height:28.00px;background:#e3e3e3;"></div>
<span class="t" style="top:616.28px;font-size:16.3px;color:#ff1c1c;right:1919.25px;transform:scaleX(0.9898);transform-origin:100% 0;">Actions.Row_2</span>
<div style="left:134.00px;top:611.00px;width:281.00px;height:28.00px;background:#fff;"></div>
<div class="clip" style="left:140.00px;top:611px;width:274.40px;height:29px"><span class="t" style="left:0;top:5.28px;font-size:16.3px;color:#1c1cff;transform:scaleX(0.9945);transform-origin:0 0;">SETF(GetRef(Width),"=BOUND(INDEX(0,Prop.Width.Format),0,FALSE,INDEX(0,Prop.Width.Format))")</span></div>
<div style="left:416.00px;top:611.00px;width:229.00px;height:28.00px;background:#fff;"></div>
<span class="t" style="top:616.28px;font-size:16.3px;color:#1c1cff;left:420.00px;transform:scaleX(1.0139);transform-origin:0 0;">INDEX(0,Prop.Width.Format)</span>
<div style="left:646.00px;top:611.00px;width:86.00px;height:28.00px;background:#fff;"></div>
<span class="t" style="top:616.28px;font-size:16.3px;color:#1c1cff;left:650.75px;transform:scaleX(1.0162);transform-origin:0 0;">""</span>
<div style="left:733.00px;top:611.00px;width:109.00px;height:28.00px;background:#fff;"></div>
<span class="t" style="top:616.28px;font-size:16.3px;color:#1c1cff;left:738.25px;transform:scaleX(1.0162);transform-origin:0 0;">""</span>
<div style="left:843.00px;top:611.00px;width:78.00px;height:28.00px;background:#fff;"></div>
<span class="t" style="top:616.28px;font-size:16.3px;color:#1c1cff;left:848.75px;transform:scaleX(1.0162);transform-origin:0 0;">""</span>
<div style="left:922.00px;top:611.00px;width:140.00px;height:28.00px;background:#fff;"></div>
<span class="t" style="top:616.28px;font-size:16.3px;color:#1c1cff;left:926.75px;transform:scaleX(1.0550);transform-origin:0 0;">User.WidthIdx=0</span>
<div style="left:1063.00px;top:611.00px;width:91.00px;height:28.00px;background:#fff;"></div>
<span class="t" style="top:616.28px;font-size:16.3px;color:#1c1cff;left:1068.00px;transform:scaleX(0.9655);transform-origin:0 0;">0</span>
<div style="left:1155.00px;top:611.00px;width:90.00px;height:28.00px;background:#fff;"></div>
<span class="t" style="top:616.28px;font-size:16.3px;color:#1c1cff;left:1159.50px;transform:scaleX(0.8740);transform-origin:0 0;">FALSE</span>
<div style="left:1246.00px;top:611.00px;width:82.00px;height:28.00px;background:#fff;"></div>
<span class="t" style="top:616.28px;font-size:16.3px;color:#1c1cff;left:1251.25px;transform:scaleX(0.8740);transform-origin:0 0;">FALSE</span>
<div style="left:1329.00px;top:611.00px;width:118.00px;height:28.00px;background:#fff;"></div>
<span class="t" style="top:616.28px;font-size:16.3px;color:#1c1cff;left:1334.40px;transform:scaleX(0.8740);transform-origin:0 0;">FALSE</span>
<div style="left:1448.00px;top:611.00px;width:101.00px;height:28.00px;background:#fff;"></div>
<span class="t" style="top:616.28px;font-size:16.3px;color:#1c1cff;left:1453.10px;transform:scaleX(0.8663);transform-origin:0 0;">TRUE</span>
<div style="left:1.00px;top:640.00px;width:133.00px;height:29.00px;background:#d6d6d6;"></div>
<div style="left:1.00px;top:640.00px;width:133.00px;height:28.00px;background:#e3e3e3;"></div>
<span class="t" style="top:645.21px;font-size:16.3px;color:#ff1c1c;right:1919.25px;transform:scaleX(0.9898);transform-origin:100% 0;">Actions.Row_3</span>
<div style="left:134.00px;top:640.00px;width:281.00px;height:28.00px;background:#fff;"></div>
<div class="clip" style="left:140.00px;top:640px;width:274.40px;height:29px"><span class="t" style="left:0;top:5.21px;font-size:16.3px;color:#1c1cff;transform:scaleX(0.9945);transform-origin:0 0;">SETF(GetRef(Width),"=BOUND(INDEX(1,Prop.Width.Format),0,FALSE,INDEX(0,Prop.Width.Format))")</span></div>
<div style="left:416.00px;top:640.00px;width:229.00px;height:28.00px;background:#fff;"></div>
<span class="t" style="top:645.21px;font-size:16.3px;color:#1c1cff;left:420.00px;transform:scaleX(1.0139);transform-origin:0 0;">INDEX(1,Prop.Width.Format)</span>
<div style="left:646.00px;top:640.00px;width:86.00px;height:28.00px;background:#fff;"></div>
<span class="t" style="top:645.21px;font-size:16.3px;color:#1c1cff;left:650.75px;transform:scaleX(1.0162);transform-origin:0 0;">""</span>
<div style="left:733.00px;top:640.00px;width:109.00px;height:28.00px;background:#fff;"></div>
<span class="t" style="top:645.21px;font-size:16.3px;color:#1c1cff;left:738.25px;transform:scaleX(1.0162);transform-origin:0 0;">""</span>
<div style="left:843.00px;top:640.00px;width:78.00px;height:28.00px;background:#fff;"></div>
<span class="t" style="top:645.21px;font-size:16.3px;color:#1c1cff;left:848.75px;transform:scaleX(1.0162);transform-origin:0 0;">""</span>
<div style="left:922.00px;top:640.00px;width:140.00px;height:28.00px;background:#fff;"></div>
<span class="t" style="top:645.21px;font-size:16.3px;color:#1c1cff;left:926.75px;transform:scaleX(1.0446);transform-origin:0 0;">User.WidthIdx=1</span>
<div style="left:1063.00px;top:640.00px;width:91.00px;height:28.00px;background:#fff;"></div>
<span class="t" style="top:645.21px;font-size:16.3px;color:#1c1cff;left:1068.00px;transform:scaleX(0.9655);transform-origin:0 0;">0</span>
<div style="left:1155.00px;top:640.00px;width:90.00px;height:28.00px;background:#fff;"></div>
<span class="t" style="top:645.21px;font-size:16.3px;color:#1c1cff;left:1159.50px;transform:scaleX(0.8740);transform-origin:0 0;">FALSE</span>
<div style="left:1246.00px;top:640.00px;width:82.00px;height:28.00px;background:#fff;"></div>
<span class="t" style="top:645.21px;font-size:16.3px;color:#1c1cff;left:1251.25px;transform:scaleX(0.8740);transform-origin:0 0;">FALSE</span>
<div style="left:1329.00px;top:640.00px;width:118.00px;height:28.00px;background:#fff;"></div>
<span class="t" style="top:645.21px;font-size:16.3px;color:#1c1cff;left:1334.40px;transform:scaleX(0.8740);transform-origin:0 0;">FALSE</span>
<div style="left:1448.00px;top:640.00px;width:101.00px;height:28.00px;background:#fff;"></div>
<span class="t" style="top:645.21px;font-size:16.3px;color:#1c1cff;left:1453.10px;transform:scaleX(0.8663);transform-origin:0 0;">TRUE</span>
<div style="left:1.00px;top:669.00px;width:133.00px;height:29.00px;background:#d6d6d6;"></div>
<div style="left:1.00px;top:669.00px;width:133.00px;height:28.00px;background:#e3e3e3;"></div>
<span class="t" style="top:674.14px;font-size:16.3px;color:#ff1c1c;right:1919.25px;transform:scaleX(0.9898);transform-origin:100% 0;">Actions.Row_4</span>
<div style="left:134.00px;top:669.00px;width:281.00px;height:28.00px;background:#fff;"></div>
<div class="clip" style="left:140.00px;top:669px;width:274.40px;height:29px"><span class="t" style="left:0;top:5.14px;font-size:16.3px;color:#1c1cff;transform:scaleX(0.9945);transform-origin:0 0;">SETF(GetRef(Width),"=BOUND(INDEX(2,Prop.Width.Format),0,FALSE,INDEX(0,Prop.Width.Format))")</span></div>
<div style="left:416.00px;top:669.00px;width:229.00px;height:28.00px;background:#fff;"></div>
<span class="t" style="top:674.14px;font-size:16.3px;color:#1c1cff;left:420.00px;transform:scaleX(1.0139);transform-origin:0 0;">INDEX(2,Prop.Width.Format)</span>
<div style="left:646.00px;top:669.00px;width:86.00px;height:28.00px;background:#fff;"></div>
<span class="t" style="top:674.14px;font-size:16.3px;color:#1c1cff;left:650.75px;transform:scaleX(1.0162);transform-origin:0 0;">""</span>
<div style="left:733.00px;top:669.00px;width:109.00px;height:28.00px;background:#fff;"></div>
<span class="t" style="top:674.14px;font-size:16.3px;color:#1c1cff;left:738.25px;transform:scaleX(1.0162);transform-origin:0 0;">""</span>
<div style="left:843.00px;top:669.00px;width:78.00px;height:28.00px;background:#fff;"></div>
<span class="t" style="top:674.14px;font-size:16.3px;color:#1c1cff;left:848.75px;transform:scaleX(1.0162);transform-origin:0 0;">""</span>
<div style="left:922.00px;top:669.00px;width:140.00px;height:28.00px;background:#fff;"></div>
<span class="t" style="top:674.14px;font-size:16.3px;color:#1c1cff;left:926.75px;transform:scaleX(1.0550);transform-origin:0 0;">User.WidthIdx=2</span>
<div style="left:1063.00px;top:669.00px;width:91.00px;height:28.00px;background:#fff;"></div>
<span class="t" style="top:674.14px;font-size:16.3px;color:#1c1cff;left:1068.00px;transform:scaleX(0.9655);transform-origin:0 0;">0</span>
<div style="left:1155.00px;top:669.00px;width:90.00px;height:28.00px;background:#fff;"></div>
<span class="t" style="top:674.14px;font-size:16.3px;color:#1c1cff;left:1159.50px;transform:scaleX(0.8740);transform-origin:0 0;">FALSE</span>
<div style="left:1246.00px;top:669.00px;width:82.00px;height:28.00px;background:#fff;"></div>
<span class="t" style="top:674.14px;font-size:16.3px;color:#1c1cff;left:1251.25px;transform:scaleX(0.8740);transform-origin:0 0;">FALSE</span>
<div style="left:1329.00px;top:669.00px;width:118.00px;height:28.00px;background:#fff;"></div>
<span class="t" style="top:674.14px;font-size:16.3px;color:#1c1cff;left:1334.40px;transform:scaleX(0.8740);transform-origin:0 0;">FALSE</span>
<div style="left:1448.00px;top:669.00px;width:101.00px;height:28.00px;background:#fff;"></div>
<span class="t" style="top:674.14px;font-size:16.3px;color:#1c1cff;left:1453.10px;transform:scaleX(0.8663);transform-origin:0 0;">TRUE</span>
<div style="left:1.00px;top:698.00px;width:133.00px;height:29.00px;background:#d6d6d6;"></div>
<div style="left:1.00px;top:698.00px;width:133.00px;height:28.00px;background:#e3e3e3;"></div>
<span class="t" style="top:703.07px;font-size:16.3px;color:#ff1c1c;right:1919.25px;transform:scaleX(0.9898);transform-origin:100% 0;">Actions.Row_5</span>
<div style="left:134.00px;top:698.00px;width:281.00px;height:28.00px;background:#fff;"></div>
<div class="clip" style="left:140.00px;top:698px;width:274.40px;height:29px"><span class="t" style="left:0;top:5.07px;font-size:16.3px;color:#1c1cff;transform:scaleX(0.9945);transform-origin:0 0;">SETF(GetRef(Width),"=BOUND(INDEX(3,Prop.Width.Format),0,FALSE,INDEX(0,Prop.Width.Format))")</span></div>
<div style="left:416.00px;top:698.00px;width:229.00px;height:28.00px;background:#fff;"></div>
<span class="t" style="top:703.07px;font-size:16.3px;color:#1c1cff;left:420.00px;transform:scaleX(1.0139);transform-origin:0 0;">INDEX(3,Prop.Width.Format)</span>
<div style="left:646.00px;top:698.00px;width:86.00px;height:28.00px;background:#fff;"></div>
<span class="t" style="top:703.07px;font-size:16.3px;color:#1c1cff;left:650.75px;transform:scaleX(1.0162);transform-origin:0 0;">""</span>
<div style="left:733.00px;top:698.00px;width:109.00px;height:28.00px;background:#fff;"></div>
<span class="t" style="top:703.07px;font-size:16.3px;color:#1c1cff;left:738.25px;transform:scaleX(1.0162);transform-origin:0 0;">""</span>
<div style="left:843.00px;top:698.00px;width:78.00px;height:28.00px;background:#fff;"></div>
<span class="t" style="top:703.07px;font-size:16.3px;color:#1c1cff;left:848.75px;transform:scaleX(1.0162);transform-origin:0 0;">""</span>
<div style="left:922.00px;top:698.00px;width:140.00px;height:28.00px;background:#fff;"></div>
<span class="t" style="top:703.07px;font-size:16.3px;color:#1c1cff;left:926.75px;transform:scaleX(1.0550);transform-origin:0 0;">User.WidthIdx=3</span>
<div style="left:1063.00px;top:698.00px;width:91.00px;height:28.00px;background:#fff;"></div>
<span class="t" style="top:703.07px;font-size:16.3px;color:#1c1cff;left:1068.00px;transform:scaleX(0.9655);transform-origin:0 0;">0</span>
<div style="left:1155.00px;top:698.00px;width:90.00px;height:28.00px;background:#fff;"></div>
<span class="t" style="top:703.07px;font-size:16.3px;color:#1c1cff;left:1159.50px;transform:scaleX(0.8740);transform-origin:0 0;">FALSE</span>
<div style="left:1246.00px;top:698.00px;width:82.00px;height:28.00px;background:#fff;"></div>
<span class="t" style="top:703.07px;font-size:16.3px;color:#1c1cff;left:1251.25px;transform:scaleX(0.8740);transform-origin:0 0;">FALSE</span>
<div style="left:1329.00px;top:698.00px;width:118.00px;height:28.00px;background:#fff;"></div>
<span class="t" style="top:703.07px;font-size:16.3px;color:#1c1cff;left:1334.40px;transform:scaleX(0.8740);transform-origin:0 0;">FALSE</span>
<div style="left:1448.00px;top:698.00px;width:101.00px;height:28.00px;background:#fff;"></div>
<span class="t" style="top:703.07px;font-size:16.3px;color:#1c1cff;left:1453.10px;transform:scaleX(0.8663);transform-origin:0 0;">TRUE</span>
<div style="left:1.00px;top:727.00px;width:133.00px;height:29.00px;background:#d6d6d6;"></div>
<div style="left:1.00px;top:727.00px;width:133.00px;height:28.00px;background:#e3e3e3;"></div>
<span class="t" style="top:732.00px;font-size:16.3px;color:#ff1c1c;right:1919.25px;transform:scaleX(0.9898);transform-origin:100% 0;">Actions.Row_6</span>
<div style="left:134.00px;top:727.00px;width:281.00px;height:28.00px;background:#fff;"></div>
<span class="t" style="top:732.00px;font-size:16.3px;color:#1c1cff;left:140.00px;transform:scaleX(0.9946);transform-origin:0 0;">""</span>
<div style="left:416.00px;top:727.00px;width:229.00px;height:28.00px;background:#fff;"></div>
<span class="t" style="top:732.00px;font-size:16.3px;color:#1c1cff;left:420.00px;transform:scaleX(1.0257);transform-origin:0 0;">Prop.Height.Label</span>
<div style="left:646.00px;top:727.00px;width:86.00px;height:28.00px;background:#fff;"></div>
<span class="t" style="top:732.00px;font-size:16.3px;color:#1c1cff;left:650.75px;transform:scaleX(1.0162);transform-origin:0 0;">""</span>
<div style="left:733.00px;top:727.00px;width:109.00px;height:28.00px;background:#fff;"></div>
<span class="t" style="top:732.00px;font-size:16.3px;color:#1c1cff;left:738.25px;transform:scaleX(1.0162);transform-origin:0 0;">""</span>
<div style="left:843.00px;top:727.00px;width:78.00px;height:28.00px;background:#fff;"></div>
<span class="t" style="top:732.00px;font-size:16.3px;color:#1c1cff;left:848.75px;transform:scaleX(1.0162);transform-origin:0 0;">""</span>
<div style="left:922.00px;top:727.00px;width:140.00px;height:28.00px;background:#fff;"></div>
<span class="t" style="top:732.00px;font-size:16.3px;color:#1c1cff;left:926.75px;transform:scaleX(0.9655);transform-origin:0 0;">0</span>
<div style="left:1063.00px;top:727.00px;width:91.00px;height:28.00px;background:#fff;"></div>
<span class="t" style="top:732.00px;font-size:16.3px;color:#1c1cff;left:1068.00px;transform:scaleX(0.9655);transform-origin:0 0;">0</span>
<div style="left:1155.00px;top:727.00px;width:90.00px;height:28.00px;background:#fff;"></div>
<span class="t" style="top:732.00px;font-size:16.3px;color:#1c1cff;left:1159.50px;transform:scaleX(0.8663);transform-origin:0 0;">TRUE</span>
<div style="left:1246.00px;top:727.00px;width:82.00px;height:28.00px;background:#fff;"></div>
<span class="t" style="top:732.00px;font-size:16.3px;color:#1c1cff;left:1251.25px;transform:scaleX(0.8740);transform-origin:0 0;">FALSE</span>
<div style="left:1329.00px;top:727.00px;width:118.00px;height:28.00px;background:#fff;"></div>
<span class="t" style="top:732.00px;font-size:16.3px;color:#1c1cff;left:1334.40px;transform:scaleX(0.8663);transform-origin:0 0;">TRUE</span>
<div style="left:1448.00px;top:727.00px;width:101.00px;height:28.00px;background:#fff;"></div>
<span class="t" style="top:732.00px;font-size:16.3px;color:#1c1cff;left:1453.10px;transform:scaleX(0.8740);transform-origin:0 0;">FALSE</span>
<div style="left:1.00px;top:756.00px;width:133.00px;height:29.00px;background:#d6d6d6;"></div>
<div style="left:1.00px;top:756.00px;width:133.00px;height:28.00px;background:#e3e3e3;"></div>
<span class="t" style="top:760.93px;font-size:16.3px;color:#ff1c1c;right:1919.25px;transform:scaleX(0.9898);transform-origin:100% 0;">Actions.Row_7</span>
<div style="left:134.00px;top:756.00px;width:281.00px;height:28.00px;background:#fff;"></div>
<div class="clip" style="left:140.00px;top:756px;width:274.40px;height:29px"><span class="t" style="left:0;top:4.93px;font-size:16.3px;color:#1c1cff;transform:scaleX(0.9913);transform-origin:0 0;">SETF(GetRef(Height),"=BOUND(INDEX(0,Prop.Height.Format),0,FALSE,INDEX(0,Prop.Height.Format))")</span></div>
<div style="left:416.00px;top:756.00px;width:229.00px;height:28.00px;background:#fff;"></div>
<span class="t" style="top:760.93px;font-size:16.3px;color:#1c1cff;left:420.00px;transform:scaleX(1.0123);transform-origin:0 0;">INDEX(0,Prop.Height.Format)</span>
<div style="left:646.00px;top:756.00px;width:86.00px;height:28.00px;background:#fff;"></div>
<span class="t" style="top:760.93px;font-size:16.3px;color:#1c1cff;left:650.75px;transform:scaleX(1.0162);transform-origin:0 0;">""</span>
<div style="left:733.00px;top:756.00px;width:109.00px;height:28.00px;background:#fff;"></div>
<span class="t" style="top:760.93px;font-size:16.3px;color:#1c1cff;left:738.25px;transform:scaleX(1.0162);transform-origin:0 0;">""</span>
<div style="left:843.00px;top:756.00px;width:78.00px;height:28.00px;background:#fff;"></div>
<span class="t" style="top:760.93px;font-size:16.3px;color:#1c1cff;left:848.75px;transform:scaleX(1.0162);transform-origin:0 0;">""</span>
<div style="left:922.00px;top:756.00px;width:140.00px;height:28.00px;background:#fff;"></div>
<span class="t" style="top:760.93px;font-size:16.3px;color:#1c1cff;left:926.75px;transform:scaleX(1.0510);transform-origin:0 0;">User.HeightIdx=0</span>
<div style="left:1063.00px;top:756.00px;width:91.00px;height:28.00px;background:#fff;"></div>
<span class="t" style="top:760.93px;font-size:16.3px;color:#1c1cff;left:1068.00px;transform:scaleX(0.9655);transform-origin:0 0;">0</span>
<div style="left:1155.00px;top:756.00px;width:90.00px;height:28.00px;background:#fff;"></div>
<span class="t" style="top:760.93px;font-size:16.3px;color:#1c1cff;left:1159.50px;transform:scaleX(0.8740);transform-origin:0 0;">FALSE</span>
<div style="left:1246.00px;top:756.00px;width:82.00px;height:28.00px;background:#fff;"></div>
<span class="t" style="top:760.93px;font-size:16.3px;color:#1c1cff;left:1251.25px;transform:scaleX(0.8740);transform-origin:0 0;">FALSE</span>
<div style="left:1329.00px;top:756.00px;width:118.00px;height:28.00px;background:#fff;"></div>
<span class="t" style="top:760.93px;font-size:16.3px;color:#1c1cff;left:1334.40px;transform:scaleX(0.8740);transform-origin:0 0;">FALSE</span>
<div style="left:1448.00px;top:756.00px;width:101.00px;height:28.00px;background:#fff;"></div>
<span class="t" style="top:760.93px;font-size:16.3px;color:#1c1cff;left:1453.10px;transform:scaleX(0.8663);transform-origin:0 0;">TRUE</span>
<div style="left:1.00px;top:785.00px;width:133.00px;height:28.00px;background:#d6d6d6;"></div>
<div style="left:1.00px;top:785.00px;width:133.00px;height:27.00px;background:#e3e3e3;"></div>
<span class="t" style="top:789.86px;font-size:16.3px;color:#ff1c1c;right:1919.25px;transform:scaleX(0.9898);transform-origin:100% 0;">Actions.Row_8</span>
<div style="left:134.00px;top:785.00px;width:281.00px;height:27.00px;background:#fff;"></div>
<div class="clip" style="left:140.00px;top:785px;width:274.40px;height:28px"><span class="t" style="left:0;top:4.86px;font-size:16.3px;color:#1c1cff;transform:scaleX(0.9913);transform-origin:0 0;">SETF(GetRef(Height),"=BOUND(INDEX(1,Prop.Height.Format),0,FALSE,INDEX(0,Prop.Height.Format))")</span></div>
<div style="left:416.00px;top:785.00px;width:229.00px;height:27.00px;background:#fff;"></div>
<span class="t" style="top:789.86px;font-size:16.3px;color:#1c1cff;left:420.00px;transform:scaleX(1.0123);transform-origin:0 0;">INDEX(1,Prop.Height.Format)</span>
<div style="left:646.00px;top:785.00px;width:86.00px;height:27.00px;background:#fff;"></div>
<span class="t" style="top:789.86px;font-size:16.3px;color:#1c1cff;left:650.75px;transform:scaleX(1.0162);transform-origin:0 0;">""</span>
<div style="left:733.00px;top:785.00px;width:109.00px;height:27.00px;background:#fff;"></div>
<span class="t" style="top:789.86px;font-size:16.3px;color:#1c1cff;left:738.25px;transform:scaleX(1.0162);transform-origin:0 0;">""</span>
<div style="left:843.00px;top:785.00px;width:78.00px;height:27.00px;background:#fff;"></div>
<span class="t" style="top:789.86px;font-size:16.3px;color:#1c1cff;left:848.75px;transform:scaleX(1.0162);transform-origin:0 0;">""</span>
<div style="left:922.00px;top:785.00px;width:140.00px;height:27.00px;background:#fff;"></div>
<span class="t" style="top:789.86px;font-size:16.3px;color:#1c1cff;left:926.75px;transform:scaleX(1.0438);transform-origin:0 0;">User.HeightIdx=1</span>
<div style="left:1063.00px;top:785.00px;width:91.00px;height:27.00px;background:#fff;"></div>
<span class="t" style="top:789.86px;font-size:16.3px;color:#1c1cff;left:1068.00px;transform:scaleX(0.9655);transform-origin:0 0;">0</span>
<div style="left:1155.00px;top:785.00px;width:90.00px;height:27.00px;background:#fff;"></div>
<span class="t" style="top:789.86px;font-size:16.3px;color:#1c1cff;left:1159.50px;transform:scaleX(0.8740);transform-origin:0 0;">FALSE</span>
<div style="left:1246.00px;top:785.00px;width:82.00px;height:27.00px;background:#fff;"></div>
<span class="t" style="top:789.86px;font-size:16.3px;color:#1c1cff;left:1251.25px;transform:scaleX(0.8740);transform-origin:0 0;">FALSE</span>
<div style="left:1329.00px;top:785.00px;width:118.00px;height:27.00px;background:#fff;"></div>
<span class="t" style="top:789.86px;font-size:16.3px;color:#1c1cff;left:1334.40px;transform:scaleX(0.8740);transform-origin:0 0;">FALSE</span>
<div style="left:1448.00px;top:785.00px;width:101.00px;height:27.00px;background:#fff;"></div>
<span class="t" style="top:789.86px;font-size:16.3px;color:#1c1cff;left:1453.10px;transform:scaleX(0.8663);transform-origin:0 0;">TRUE</span>
<div style="left:1.00px;top:817.00px;width:2047.00px;height:1.00px;background:#8e8e8e;"></div>
<div style="left:1.00px;top:818.00px;width:2047.00px;height:6.00px;background:#99b4d2;"></div>
</div>
<div class="g" id="edit-formula-dialog"><div style="left:1026.80px;top:210.30px;width:840.20px;height:299.00px;background:#f1f1f1;border-radius:9px;box-shadow:0 0 0 1px rgba(0,0,0,.13),0 2px 21px rgba(0,0,0,.11),0 32px 64px rgba(0,0,0,.29);"></div>
<div style="left:1026.80px;top:210.30px;width:840.20px;height:42.00px;background:#f3f3f3;border-radius:9px 9px 0 0;"></div>
<div style="left:1834.80px;top:251.40px;width:32.20px;height:1.00px;background:#e3e3e3;"></div>
<span class="t" style="top:220.94px;font-size:17.2px;color:#1c1c1c;left:1037.40px;transform:scaleX(0.9729);transform-origin:0 0;">Edit Formula</span>
<svg class="a" style="left:1832px;top:219px" width="24" height="24" viewBox="0 0 24 24"><path d="M4.7 4.4L18.7 18.8M18.7 4.4L4.7 18.8" stroke="#1e1e1e" stroke-width="1.35" fill="none"/></svg>
<div style="left:1041.40px;top:264.60px;width:811.20px;height:172.70px;background:#fff;border:1px solid #d9d9d9;border-bottom-color:#c9c9c9;box-sizing:border-box;"></div>
<span class="t" style="top:271.79px;font-size:18.5px;color:#1e1e1e;left:1044.60px;transform:scaleX(1.0173);transform-origin:0 0;">=BOUND(1800 mm,0,</span>
<span class="t" style="top:298.39px;font-size:18.5px;color:#1e1e1e;left:1044.60px;transform:scaleX(0.9939);transform-origin:0 0;">FALSE,INDEX(0,Prop.Width.Format),INDEX(0,Prop.Width.Format),</span>
<span class="t" style="top:324.99px;font-size:18.5px;color:#1e1e1e;left:1044.60px;transform:scaleX(0.9939);transform-origin:0 0;">FALSE,INDEX(1,Prop.Width.Format),INDEX(1,Prop.Width.Format),</span>
<span class="t" style="top:351.59px;font-size:18.5px;color:#1e1e1e;left:1044.60px;transform:scaleX(0.9939);transform-origin:0 0;">FALSE,INDEX(2,Prop.Width.Format),INDEX(2,Prop.Width.Format),</span>
<span class="t" style="top:378.19px;font-size:18.5px;color:#1e1e1e;left:1044.60px;transform:scaleX(0.9958);transform-origin:0 0;">FALSE,INDEX(3,Prop.Width.Format),INDEX(3,Prop.Width.Format)</span>
<span class="t" style="top:404.79px;font-size:18.5px;color:#1e1e1e;left:1044.40px;transform:scaleX(0.8425);transform-origin:0 0;">)</span>
<div style="left:1043.20px;top:400.70px;width:1.00px;height:25.50px;background:#111;"></div>
<div style="left:1057.50px;top:235.90px;width:368.20px;height:29.30px;background:#fff;border:1px solid #dcdcdc;border-radius:3px;box-sizing:border-box;box-shadow:0 2px 4px rgba(0,0,0,.18);"></div>
<span class="t" style="top:241.68px;font-size:16.5px;color:#3c3c3c;left:1065.10px;transform:scaleX(1.0316);transform-origin:0 0;">BOUND(value, type, ignore, value1, value2, ...)</span>
<div style="left:1042.60px;top:463.40px;width:30.90px;height:35.70px;background:#fdfdfd;border:1px solid #e2e2e2;border-radius:4px;box-sizing:border-box;"></div>
<svg class="a" style="left:1046px;top:469px" width="24" height="24" viewBox="0 0 24 24"><circle cx="11.8" cy="11.5" r="9.7" fill="#2f6eb5"/><text x="11.8" y="16.6" font-family="Liberation Sans, sans-serif" font-weight="700" font-size="14.5" fill="#fff" text-anchor="middle">?</text></svg>
<div style="left:1655.50px;top:462.70px;width:92.40px;height:37.00px;background:#fbfbfb;border:1.5px solid #559cdf;border-radius:4px;box-sizing:border-box;"></div>
<span class="t" style="top:471.84px;font-size:14.9px;color:#1c1c1c;left:1691.70px;transform:scaleX(0.9389);transform-origin:0 0;">OK</span>
<div style="left:1759.30px;top:462.70px;width:92.40px;height:37.00px;background:#fbfbfb;border:1px solid #dedede;border-bottom-color:#cfcfcf;border-radius:4.5px;box-sizing:border-box;"></div>
<span class="t" style="top:471.84px;font-size:14.9px;color:#1c1c1c;left:1783.60px;transform:scaleX(0.9599);transform-origin:0 0;">Cancel</span>
<svg class="a" style="left:1851px;top:496px" width="12" height="10" viewBox="0 0 12 10"><rect x="9" y="1" width="1.8" height="1.8" fill="#ababab"/><rect x="6" y="4" width="1.8" height="1.8" fill="#ababab"/><rect x="9" y="4" width="1.8" height="1.8" fill="#ababab"/><rect x="3" y="7" width="1.8" height="1.8" fill="#ababab"/><rect x="6" y="7" width="1.8" height="1.8" fill="#ababab"/><rect x="9" y="7" width="1.8" height="1.8" fill="#ababab"/></svg>
</div>

</body></html>
